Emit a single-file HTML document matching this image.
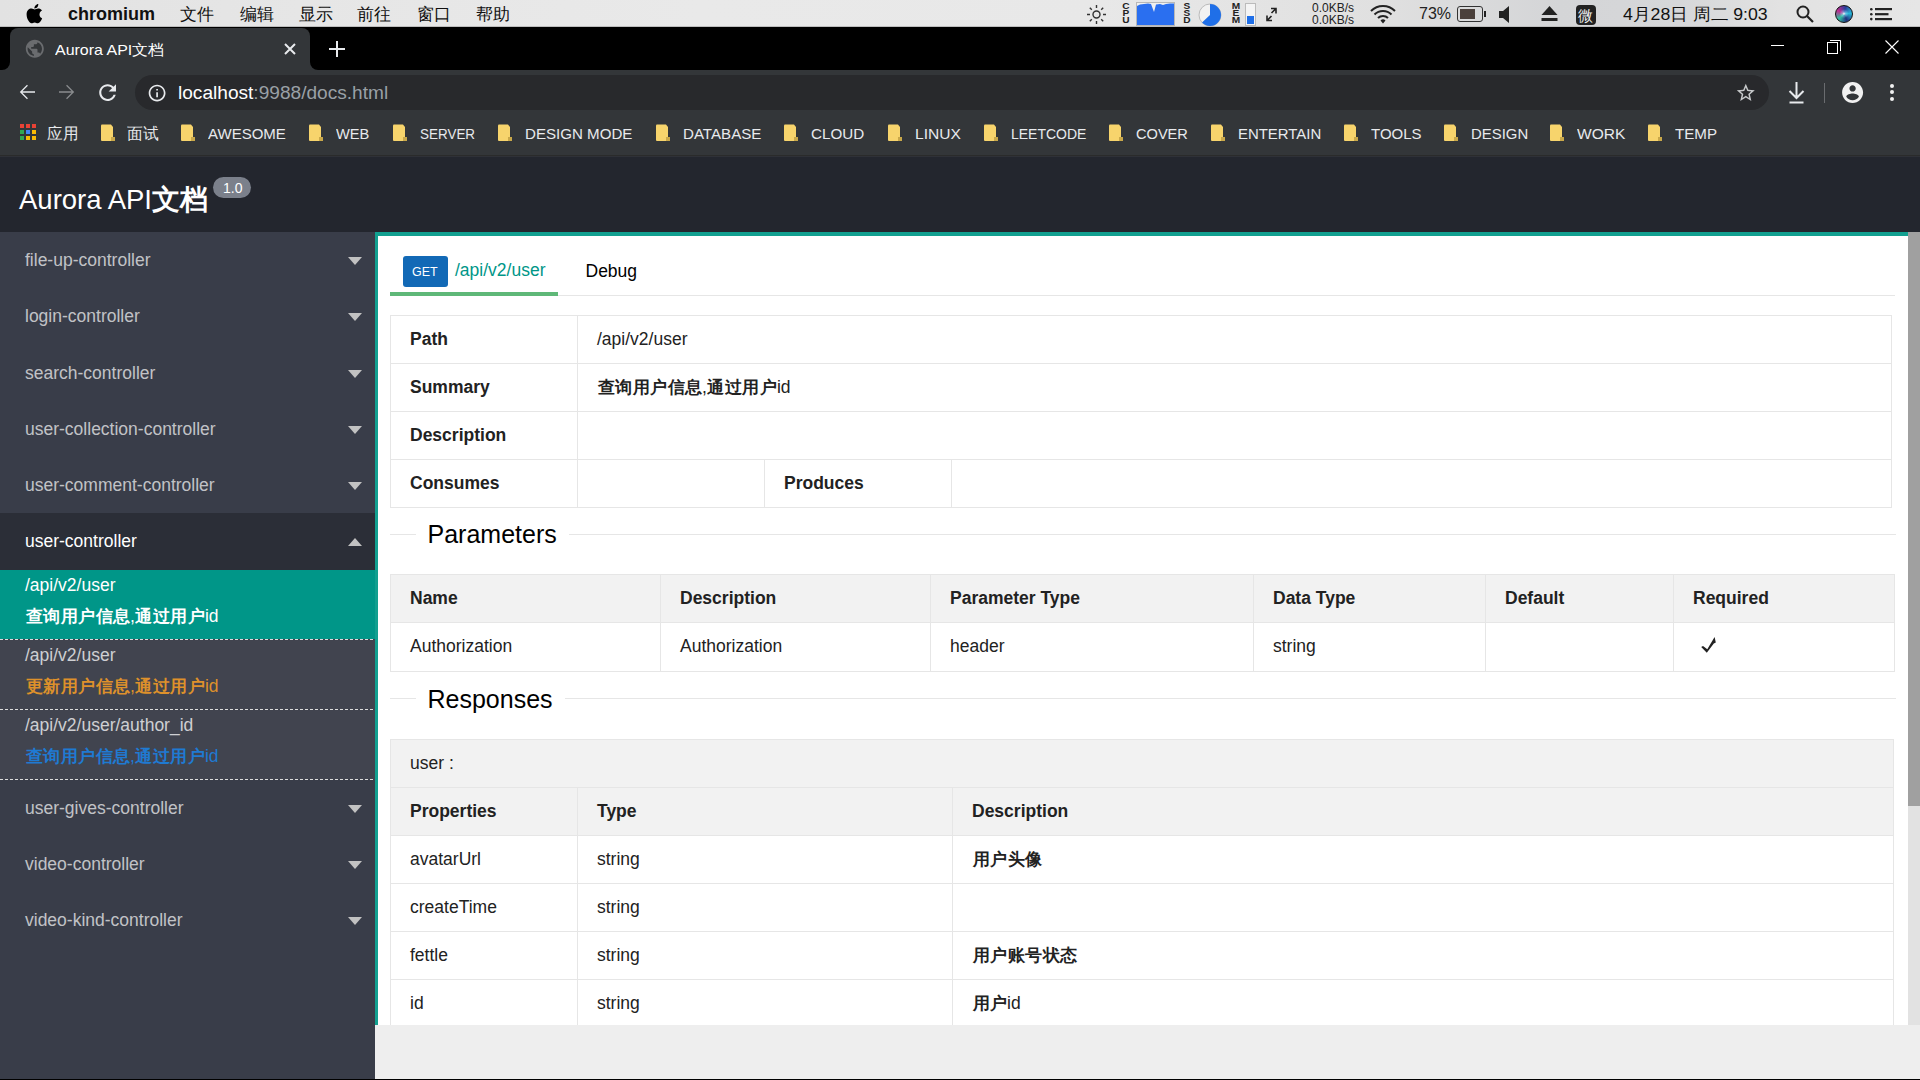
<!DOCTYPE html><html><head><meta charset="utf-8"><style>
*{box-sizing:border-box;margin:0;padding:0}
html,body{width:1920px;height:1080px;overflow:hidden;background:#000;font-family:"Liberation Sans",sans-serif}
.a{position:absolute}
.t{position:absolute;white-space:nowrap;line-height:1}
.cj{font-size:16.5px;letter-spacing:.5px;font-weight:bold;margin-left:.5px;margin-right:-.5px}
.cjh{letter-spacing:-0.5px;font-weight:bold}
.b{font-weight:bold}
svg{position:absolute;overflow:visible}
</style></head><body>
<div class="a" style="left:0px;top:0px;width:1920px;height:27px;background:linear-gradient(90deg,#e2e2e2 0px,#e6e6e6 300px,#e9e9e9 700px,#e8e8e8 1100px,#e0e0e0 1380px,#d4d5d7 1560px,#d6d7d9 1680px,#e2e2e2 1780px,#e6e6e6 1920px);"></div>
<div class="a" style="left:0px;top:26px;width:1920px;height:1px;background:#bdbdbd;"></div>
<svg style="left:26px;top:4px" width="18" height="20" viewBox="0 0 170 200"><path fill="#000" d="M150 68c-1 1-20 12-20 36 0 28 25 38 26 38 0 1-4 14-13 27-8 11-17 23-30 23s-16-8-31-8c-15 0-20 8-32 8s-21-11-30-24C9 153 1 128 1 104c0-38 25-58 49-58 13 0 24 9 32 9 8 0 20-9 35-9 6 0 26 1 39 20zM108 32c6-7 10-17 10-27 0-1 0-3 0-4-10 0-21 7-28 14-6 6-11 16-11 26 0 1 0 3 0 3 1 0 2 0 3 0 9 0 19-6 26-12z"/></svg>
<div class="t" style="left:68px;top:4.76px;font-size:18px;color:#111;font-weight:bold">chromium</div>
<div class="t" style="left:180px;top:5.61px;font-size:17px;color:#111;">文件</div>
<div class="t" style="left:240px;top:5.61px;font-size:17px;color:#111;">编辑</div>
<div class="t" style="left:299px;top:5.61px;font-size:17px;color:#111;">显示</div>
<div class="t" style="left:357px;top:5.61px;font-size:17px;color:#111;">前往</div>
<div class="t" style="left:417px;top:5.61px;font-size:17px;color:#111;">窗口</div>
<div class="t" style="left:476px;top:5.61px;font-size:17px;color:#111;">帮助</div>
<svg style="left:1087px;top:5px" width="19" height="19" viewBox="0 0 19 19"><circle cx="9.5" cy="9.5" r="3.5" fill="none" stroke="#333" stroke-width="1.4"/><g stroke="#333" stroke-width="1.4"><path d="M9.5 0v3M9.5 16v3M0 9.5h3M16 9.5h3M2.8 2.8l2 2M14.2 14.2l2 2M2.8 16.2l2-2M14.2 4.8l2-2"/></g></svg>
<div class="t" style="left:1126px;top:2.15px;font-size:8.8px;color:#222;font-weight:bold;width:10px;margin-left:-5px;text-align:center;transform:scaleX(1.15)">C</div>
<div class="t" style="left:1126px;top:9.15px;font-size:8.8px;color:#222;font-weight:bold;width:10px;margin-left:-5px;text-align:center;transform:scaleX(1.15)">P</div>
<div class="t" style="left:1126px;top:16.15px;font-size:8.8px;color:#222;font-weight:bold;width:10px;margin-left:-5px;text-align:center;transform:scaleX(1.15)">U</div>
<div class="a" style="left:1136px;top:2px;width:39px;height:24px;background:#f0f0f0;border:1px solid #b8b8b8"></div>
<svg style="left:1137px;top:3px" width="37" height="22" viewBox="0 0 37 22"><path d="M0 22V3L3 1.5 7 1 11 0.5 14 1 17 9 19 1.5 23 1 26 2 29 1 33 0.5 37 0.5V22z" fill="#2a6ff0"/></svg>
<div class="t" style="left:1187px;top:2.15px;font-size:8.8px;color:#222;font-weight:bold;width:10px;margin-left:-5px;text-align:center;transform:scaleX(1.15)">S</div>
<div class="t" style="left:1187px;top:9.15px;font-size:8.8px;color:#222;font-weight:bold;width:10px;margin-left:-5px;text-align:center;transform:scaleX(1.15)">S</div>
<div class="t" style="left:1187px;top:16.15px;font-size:8.8px;color:#222;font-weight:bold;width:10px;margin-left:-5px;text-align:center;transform:scaleX(1.15)">D</div>
<svg style="left:1198px;top:3px" width="24" height="24" viewBox="0 0 24 24"><circle cx="12" cy="12" r="11" fill="#f2f2f2" stroke="#bbb"/><path d="M12 12V1a11 11 0 0 1 0 22 11 11 0 0 1-8-3.5z" fill="#1f6fe8"/></svg>
<div class="t" style="left:1236px;top:2.15px;font-size:8.8px;color:#222;font-weight:bold;width:10px;margin-left:-5px;text-align:center;transform:scaleX(1.15)">M</div>
<div class="t" style="left:1236px;top:9.15px;font-size:8.8px;color:#222;font-weight:bold;width:10px;margin-left:-5px;text-align:center;transform:scaleX(1.15)">E</div>
<div class="t" style="left:1236px;top:16.15px;font-size:8.8px;color:#222;font-weight:bold;width:10px;margin-left:-5px;text-align:center;transform:scaleX(1.15)">M</div>
<div class="a" style="left:1245px;top:3px;width:11px;height:23px;background:#f4f4f4;border:1px solid #bbb"></div>
<div class="a" style="left:1247px;top:16px;width:7px;height:8px;background:#1f6fe8;"></div>
<svg style="left:1266px;top:6px" width="11" height="17" viewBox="0 0 11 17"><path d="M5 2.5h5v5M10 2.5L5.5 7M6 14.5H1v-5M1 14.5L5.5 10" fill="none" stroke="#222" stroke-width="1.6"/></svg>
<div class="t" style="left:1312px;top:1.84px;font-size:12px;color:#222;">0.0KB/s</div>
<div class="t" style="left:1312px;top:13.84px;font-size:12px;color:#222;">0.0KB/s</div>
<svg style="left:1370px;top:5px" width="26" height="19" viewBox="0 0 26 19"><path d="M1 6a17 17 0 0 1 24 0M4.5 9.5a12 12 0 0 1 17 0M8 13a7 7 0 0 1 10 0" fill="none" stroke="#222" stroke-width="2"/><path d="M10.5 15.5l2.5 3 2.5-3a3.5 3.5 0 0 0-5 0z" fill="#222"/></svg>
<div class="t" style="left:1419px;top:6.46px;font-size:16px;color:#222;">73%</div>
<div class="a" style="left:1457px;top:6px;width:26px;height:16px;background:transparent;border:1.5px solid #333;border-radius:3px"></div>
<div class="a" style="left:1460px;top:9px;width:15px;height:10px;background:#4b403b;"></div>
<div class="a" style="left:1484px;top:11px;width:2px;height:6px;background:#222;"></div>
<svg style="left:1499px;top:6px" width="14" height="17" viewBox="0 0 14 17"><path d="M0 5h4l6-5v17l-6-5H0z" fill="#222"/></svg>
<svg style="left:1541px;top:6px" width="17" height="17" viewBox="0 0 17 17"><path d="M8.5 0l8 9H.5z" fill="#222"/><rect x=".5" y="12" width="16" height="3" fill="#222"/></svg>
<div class="a" style="left:1576px;top:5px;width:20px;height:20px;background:#222;border-radius:4px"></div>
<div class="t" style="left:1578px;top:8.30px;font-size:15px;color:#eee;">微</div>
<div class="t" style="left:1623px;top:5.61px;font-size:17px;color:#111;;transform-origin:0 0;transform:scaleX(1.0410)">4月28日 周二 9:03</div>
<svg style="left:1796px;top:5px" width="18" height="18" viewBox="0 0 18 18"><circle cx="7" cy="7" r="5.5" fill="none" stroke="#222" stroke-width="2"/><path d="M11 11l6 6" stroke="#222" stroke-width="2.2"/></svg>
<div class="a" style="left:1835px;top:5px;width:18px;height:18px;background:radial-gradient(circle at 50% 48%,rgba(255,255,255,.95) 0,rgba(160,230,255,.5) 15%,rgba(0,0,0,0) 40%),conic-gradient(from 300deg,#c02c90,#2a3c9a,#28b8d8,#203080,#30c0a0,#c02c90);border-radius:50%;border:1.5px solid #111"></div>
<svg style="left:1870px;top:8px" width="22" height="13" viewBox="0 0 22 13"><g fill="#222"><circle cx="1.3" cy="1.3" r="1.3"/><circle cx="1.3" cy="6.2" r="1.3"/><circle cx="1.3" cy="11.1" r="1.3"/><rect x="5" y="0" width="17" height="2.2"/><rect x="5" y="5.1" width="13.5" height="2.2"/><rect x="5" y="10" width="17" height="2.2"/></g></svg>
<div class="a" style="left:0px;top:27px;width:1920px;height:43px;background:#000;"></div>
<div class="a" style="left:0px;top:60px;width:320px;height:10px;background:#333639;"></div>
<div class="a" style="left:0px;top:60px;width:10px;height:10px;background:#000;border-bottom-right-radius:8px"></div>
<div class="a" style="left:310px;top:60px;width:10px;height:10px;background:#000;border-bottom-left-radius:8px"></div>
<div class="a" style="left:10px;top:28px;width:300px;height:42px;background:#333639;border-radius:8px 8px 0 0"></div>
<svg style="left:24.2px;top:38.2px" width="21.6" height="21.6" viewBox="0 0 24 24"><path fill="#6a6c6f" d="M12 2C6.48 2 2 6.48 2 12s4.48 10 10 10 10-4.48 10-10S17.52 2 12 2zm-1 17.93c-3.95-.49-7-3.85-7-7.93 0-.62.08-1.210.21-1.79L9 15v1c0 1.1.9 2 2 2v1.93zm6.9-2.54c-.26-.81-1-1.39-1.9-1.39h-1v-3c0-.55-.45-1-1-1H8v-2h2c.55 0 1-.45 1-1V7h2c1.1 0 2-.9 2-2v-.41c2.93 1.19 5 4.06 5 7.41 0 2.080-.8 3.97-2.1 5.39z"/></svg>
<div class="t" style="left:55px;top:41.80px;font-size:15px;color:#fff;;transform-origin:0 0;transform:scaleX(1.0649)">Aurora API文档</div>
<svg style="left:284px;top:43px" width="12" height="12" viewBox="0 0 12 12"><path d="M1 1l10 10M11 1L1 11" stroke="#e8eaed" stroke-width="2"/></svg>
<svg style="left:329px;top:41px" width="16" height="16" viewBox="0 0 16 16"><path d="M8 0v16M0 8h16" stroke="#e8eaed" stroke-width="2"/></svg>
<div class="a" style="left:1771px;top:45px;width:13px;height:1px;background:#fff;"></div>
<svg style="left:1827px;top:40px" width="14" height="14" viewBox="0 0 14 14"><rect x=".5" y="2.5" width="10" height="11" fill="none" stroke="#fff"/><path d="M3 .5h10.5V11" fill="none" stroke="#fff"/></svg>
<svg style="left:1885px;top:40px" width="14" height="14" viewBox="0 0 14 14"><path d="M.5 .5l13 13M13.5 .5l-13 13" stroke="#fff" stroke-width="1.1"/></svg>
<div class="a" style="left:0px;top:70px;width:1920px;height:86px;background:#333639;"></div>
<div class="a" style="left:0px;top:155px;width:1920px;height:1px;background:#2a2b2b;"></div>
<svg style="left:15px;top:80.3px" width="24" height="24" viewBox="0 0 24 24"><path fill="#e8eaed" d="M20 11.2H7.4l5.5-5.5L12 4.8 4.8 12l7.2 7.2.9-.9-5.5-5.5H20z"/></svg>
<svg style="left:55px;top:80.3px" width="24" height="24" viewBox="0 0 24 24"><path fill="#8a8c8e" d="M4 11.2h12.6l-5.5-5.5.9-.9 7.2 7.2-7.2 7.2-.9-.9 5.5-5.5H4z"/></svg>
<svg style="left:94.8px;top:80.2px" width="25.2" height="25.2" viewBox="0 0 24 24"><path fill="#e8eaed" d="M17.65 6.35C16.2 4.9 14.21 4 12 4c-4.42 0-7.99 3.58-7.99 8s3.57 8 7.99 8c3.73 0 6.84-2.55 7.73-6h-2.08c-.82 2.33-3.04 4-5.65 4-3.31 0-6-2.690-6-6s2.69-6 6-6c1.66 0 3.14.69 4.22 1.78L13 11h7V4l-2.35 2.35z"/></svg>
<div class="a" style="left:135px;top:75px;width:1634px;height:35px;background:#28292c;border-radius:17.5px"></div>
<svg style="left:147.3px;top:82.7px" width="20.2" height="20.2" viewBox="0 0 24 24"><path fill="#e8eaed" d="M11 7h2v2h-2zm0 4h2v6h-2zm1-9C6.48 2 2 6.480 2 12s4.48 10 10 10 10-4.48 10-10S17.52 2 12 2zm0 18c-4.41 0-8-3.59-8-8s3.59-8 8-8 8 3.59 8 8-3.59 8-8 8z"/></svg>
<div class="t" style="left:178px;top:83.76px;font-size:18px;color:#fff;;transform-origin:0 0;transform:scaleX(1.0609)">localhost<span style="color:#9aa0a6">:9988/docs.html</span></div>
<svg style="left:1735.2px;top:82.2px" width="21.6" height="21.6" viewBox="0 0 24 24"><path fill="#c8cacc" d="M22 9.24l-7.19-.62L12 2 9.19 8.63 2 9.24l5.46 4.73L5.82 21 12 17.27 18.18 21l-1.63-7.03L22 9.24zM12 15.4l-3.76 2.27 1-4.28-3.32-2.88 4.38-.38L12 6.1l1.71 4.04 4.38.38-3.32 2.88 1 4.28L12 15.4z"/></svg>
<svg style="left:1788px;top:82px" width="17" height="22" viewBox="0 0 17 22"><path d="M8.5 0v16M1.5 9l7 7 7-7M1.5 20.5h14" fill="none" stroke="#e8eaed" stroke-width="2"/></svg>
<div class="a" style="left:1824px;top:83px;width:1px;height:20px;background:#6a6c6f;"></div>
<svg style="left:1839.9px;top:79.9px" width="25.2" height="25.2" viewBox="0 0 24 24"><path fill="#f1f1f1" d="M12 2C6.48 2 2 6.48 2 12s4.48 10 10 10 10-4.48 10-10S17.52 2 12 2zm0 3c1.66 0 3 1.34 3 3s-1.34 3-3 3-3-1.34-3-3 1.34-3 3-3zm0 14.2c-2.5 0-4.71-1.28-6-3.22.03-1.99 4-3.08 6-3.080 1.99 0 5.97 1.09 6 3.08-1.29 1.94-3.5 3.22-6 3.22z"/></svg>
<div class="a" style="left:1890px;top:84px;width:4px;height:4px;background:#f1f1f1;border-radius:2px"></div>
<div class="a" style="left:1890px;top:90px;width:4px;height:4px;background:#f1f1f1;border-radius:2px"></div>
<div class="a" style="left:1890px;top:97px;width:4px;height:4px;background:#f1f1f1;border-radius:2px"></div>
<div class="a" style="left:20px;top:124px;width:4px;height:4px;background:#e94235;"></div>
<div class="a" style="left:26px;top:124px;width:4px;height:4px;background:#e94235;"></div>
<div class="a" style="left:32px;top:124px;width:4px;height:4px;background:#e94235;"></div>
<div class="a" style="left:20px;top:130px;width:4px;height:4px;background:#33a852;"></div>
<div class="a" style="left:26px;top:130px;width:4px;height:4px;background:#4286f5;"></div>
<div class="a" style="left:32px;top:130px;width:4px;height:4px;background:#fabb05;"></div>
<div class="a" style="left:20px;top:136px;width:4px;height:4px;background:#33a852;"></div>
<div class="a" style="left:26px;top:136px;width:4px;height:4px;background:#fabb05;"></div>
<div class="a" style="left:32px;top:136px;width:4px;height:4px;background:#fabb05;"></div>
<div class="t" style="left:47px;top:126.46px;font-size:16px;color:#e8eaed;;transform-origin:0 0;transform:scaleX(0.9750)">应用</div>
<svg style="left:100px;top:124px" width="16" height="18" viewBox="0 0 16 18"><path d="M1 1.5Q1 .5 2 .5h9l2 2.5V17H2Q1 17 1 16z" fill="#f7d46c"/><path d="M11 13h4v4h-4z" fill="#c9a84a"/></svg>
<div class="t" style="left:127px;top:125.68px;font-size:15.5px;color:#e8eaed;;transform-origin:0 0;transform:scaleX(0.9875)">面试</div>
<svg style="left:180px;top:124px" width="16" height="18" viewBox="0 0 16 18"><path d="M1 1.5Q1 .5 2 .5h9l2 2.5V17H2Q1 17 1 16z" fill="#f7d46c"/><path d="M11 13h4v4h-4z" fill="#c9a84a"/></svg>
<div class="t" style="left:208px;top:125.68px;font-size:15.5px;color:#e8eaed;;transform-origin:0 0;transform:scaleX(0.9690)">AWESOME</div>
<svg style="left:308px;top:124px" width="16" height="18" viewBox="0 0 16 18"><path d="M1 1.5Q1 .5 2 .5h9l2 2.5V17H2Q1 17 1 16z" fill="#f7d46c"/><path d="M11 13h4v4h-4z" fill="#c9a84a"/></svg>
<div class="t" style="left:336px;top:125.68px;font-size:15.5px;color:#e8eaed;;transform-origin:0 0;transform:scaleX(0.9430)">WEB</div>
<svg style="left:392px;top:124px" width="16" height="18" viewBox="0 0 16 18"><path d="M1 1.5Q1 .5 2 .5h9l2 2.5V17H2Q1 17 1 16z" fill="#f7d46c"/><path d="M11 13h4v4h-4z" fill="#c9a84a"/></svg>
<div class="t" style="left:420px;top:125.68px;font-size:15.5px;color:#e8eaed;;transform-origin:0 0;transform:scaleX(0.8681)">SERVER</div>
<svg style="left:497px;top:124px" width="16" height="18" viewBox="0 0 16 18"><path d="M1 1.5Q1 .5 2 .5h9l2 2.5V17H2Q1 17 1 16z" fill="#f7d46c"/><path d="M11 13h4v4h-4z" fill="#c9a84a"/></svg>
<div class="t" style="left:525px;top:125.68px;font-size:15.5px;color:#e8eaed;;transform-origin:0 0;transform:scaleX(0.9743)">DESIGN MODE</div>
<svg style="left:655px;top:124px" width="16" height="18" viewBox="0 0 16 18"><path d="M1 1.5Q1 .5 2 .5h9l2 2.5V17H2Q1 17 1 16z" fill="#f7d46c"/><path d="M11 13h4v4h-4z" fill="#c9a84a"/></svg>
<div class="t" style="left:683px;top:125.68px;font-size:15.5px;color:#e8eaed;;transform-origin:0 0;transform:scaleX(0.9750)">DATABASE</div>
<svg style="left:783px;top:124px" width="16" height="18" viewBox="0 0 16 18"><path d="M1 1.5Q1 .5 2 .5h9l2 2.5V17H2Q1 17 1 16z" fill="#f7d46c"/><path d="M11 13h4v4h-4z" fill="#c9a84a"/></svg>
<div class="t" style="left:811px;top:125.68px;font-size:15.5px;color:#e8eaed;;transform-origin:0 0;transform:scaleX(0.9804)">CLOUD</div>
<svg style="left:887px;top:124px" width="16" height="18" viewBox="0 0 16 18"><path d="M1 1.5Q1 .5 2 .5h9l2 2.5V17H2Q1 17 1 16z" fill="#f7d46c"/><path d="M11 13h4v4h-4z" fill="#c9a84a"/></svg>
<div class="t" style="left:915px;top:125.68px;font-size:15.5px;color:#e8eaed;;transform-origin:0 0;transform:scaleX(1.0031)">LINUX</div>
<svg style="left:983px;top:124px" width="16" height="18" viewBox="0 0 16 18"><path d="M1 1.5Q1 .5 2 .5h9l2 2.5V17H2Q1 17 1 16z" fill="#f7d46c"/><path d="M11 13h4v4h-4z" fill="#c9a84a"/></svg>
<div class="t" style="left:1011px;top:125.68px;font-size:15.5px;color:#e8eaed;;transform-origin:0 0;transform:scaleX(0.9023)">LEETCODE</div>
<svg style="left:1108px;top:124px" width="16" height="18" viewBox="0 0 16 18"><path d="M1 1.5Q1 .5 2 .5h9l2 2.5V17H2Q1 17 1 16z" fill="#f7d46c"/><path d="M11 13h4v4h-4z" fill="#c9a84a"/></svg>
<div class="t" style="left:1136px;top:125.68px;font-size:15.5px;color:#e8eaed;;transform-origin:0 0;transform:scaleX(0.9415)">COVER</div>
<svg style="left:1210px;top:124px" width="16" height="18" viewBox="0 0 16 18"><path d="M1 1.5Q1 .5 2 .5h9l2 2.5V17H2Q1 17 1 16z" fill="#f7d46c"/><path d="M11 13h4v4h-4z" fill="#c9a84a"/></svg>
<div class="t" style="left:1237.5px;top:125.68px;font-size:15.5px;color:#e8eaed;;transform-origin:0 0;transform:scaleX(0.9627)">ENTERTAIN</div>
<svg style="left:1343px;top:124px" width="16" height="18" viewBox="0 0 16 18"><path d="M1 1.5Q1 .5 2 .5h9l2 2.5V17H2Q1 17 1 16z" fill="#f7d46c"/><path d="M11 13h4v4h-4z" fill="#c9a84a"/></svg>
<div class="t" style="left:1371px;top:125.68px;font-size:15.5px;color:#e8eaed;;transform-origin:0 0;transform:scaleX(0.9662)">TOOLS</div>
<svg style="left:1443px;top:124px" width="16" height="18" viewBox="0 0 16 18"><path d="M1 1.5Q1 .5 2 .5h9l2 2.5V17H2Q1 17 1 16z" fill="#f7d46c"/><path d="M11 13h4v4h-4z" fill="#c9a84a"/></svg>
<div class="t" style="left:1471px;top:125.68px;font-size:15.5px;color:#e8eaed;;transform-origin:0 0;transform:scaleX(0.9624)">DESIGN</div>
<svg style="left:1549px;top:124px" width="16" height="18" viewBox="0 0 16 18"><path d="M1 1.5Q1 .5 2 .5h9l2 2.5V17H2Q1 17 1 16z" fill="#f7d46c"/><path d="M11 13h4v4h-4z" fill="#c9a84a"/></svg>
<div class="t" style="left:1577px;top:125.68px;font-size:15.5px;color:#e8eaed;;transform-origin:0 0;transform:scaleX(1.0017)">WORK</div>
<svg style="left:1647px;top:124px" width="16" height="18" viewBox="0 0 16 18"><path d="M1 1.5Q1 .5 2 .5h9l2 2.5V17H2Q1 17 1 16z" fill="#f7d46c"/><path d="M11 13h4v4h-4z" fill="#c9a84a"/></svg>
<div class="t" style="left:1674.5px;top:125.68px;font-size:15.5px;color:#e8eaed;;transform-origin:0 0;transform:scaleX(0.9753)">TEMP</div>
<div class="a" style="left:0px;top:156px;width:1920px;height:76px;background:#23262e;"></div>
<div class="a" style="left:0px;top:156px;width:1920px;height:1px;background:#2f3137;"></div>
<div class="t" style="left:19px;top:186.12px;font-size:27.5px;color:#fff;">Aurora API<span class="cjh">文档</span></div>
<div class="a" style="left:213px;top:177px;width:38px;height:21px;background:#7b808b;border-radius:10.5px"></div>
<div class="t" style="left:223px;top:180.65px;font-size:14px;color:#fff;">1.0</div>
<div class="a" style="left:0px;top:232px;width:375px;height:848px;background:#393d49;"></div>
<div class="t" style="left:25px;top:252.09px;font-size:17.5px;color:rgba(255,255,255,.7);">file-up-controller</div>
<div class="a" style="left:348px;top:257.00px;width:0;height:0;border-left:7.6px solid transparent;border-right:7.6px solid transparent;border-top:8.4px solid #c2c2c2"></div>
<div class="t" style="left:25px;top:308.34px;font-size:17.5px;color:rgba(255,255,255,.7);">login-controller</div>
<div class="a" style="left:348px;top:313.25px;width:0;height:0;border-left:7.6px solid transparent;border-right:7.6px solid transparent;border-top:8.4px solid #c2c2c2"></div>
<div class="t" style="left:25px;top:364.59px;font-size:17.5px;color:rgba(255,255,255,.7);">search-controller</div>
<div class="a" style="left:348px;top:369.50px;width:0;height:0;border-left:7.6px solid transparent;border-right:7.6px solid transparent;border-top:8.4px solid #c2c2c2"></div>
<div class="t" style="left:25px;top:420.84px;font-size:17.5px;color:rgba(255,255,255,.7);">user-collection-controller</div>
<div class="a" style="left:348px;top:425.75px;width:0;height:0;border-left:7.6px solid transparent;border-right:7.6px solid transparent;border-top:8.4px solid #c2c2c2"></div>
<div class="t" style="left:25px;top:477.09px;font-size:17.5px;color:rgba(255,255,255,.7);">user-comment-controller</div>
<div class="a" style="left:348px;top:482.00px;width:0;height:0;border-left:7.6px solid transparent;border-right:7.6px solid transparent;border-top:8.4px solid #c2c2c2"></div>
<div class="a" style="left:0px;top:513px;width:375px;height:57px;background:#2b2e37;"></div>
<div class="t" style="left:25px;top:533.39px;font-size:17.5px;color:#fff;">user-controller</div>
<div class="a" style="left:348px;top:538px;width:0;height:0;border-left:7.6px solid transparent;border-right:7.6px solid transparent;border-bottom:8.4px solid #c2c2c2"></div>
<div class="a" style="left:0px;top:570px;width:375px;height:210px;background:#41444f;"></div>
<div class="a" style="left:0px;top:570px;width:375px;height:69px;background:#009688;"></div>
<div class="t" style="left:25px;top:576.79px;font-size:17.5px;color:#fff;">/api/v2/user</div>
<div class="t" style="left:25px;top:608.19px;font-size:17.5px;color:#fff;"><span class="cj">查询用户信息</span>,<span class="cj">通过用户</span>id</div>
<div class="a" style="left:0px;top:639px;width:375px;height:1px;background:repeating-linear-gradient(90deg,#ddd 0 3px,transparent 3px 5px);"></div>
<div class="t" style="left:25px;top:646.79px;font-size:17.5px;color:rgba(255,255,255,.75);">/api/v2/user</div>
<div class="t" style="left:25px;top:678.19px;font-size:17.5px;color:#de912b;"><span class="cj">更新用户信息</span>,<span class="cj">通过用户</span>id</div>
<div class="a" style="left:0px;top:709px;width:375px;height:1px;background:repeating-linear-gradient(90deg,#ddd 0 3px,transparent 3px 5px);"></div>
<div class="t" style="left:25px;top:716.79px;font-size:17.5px;color:rgba(255,255,255,.75);">/api/v2/user/author_id</div>
<div class="t" style="left:25px;top:748.19px;font-size:17.5px;color:#1f7ad2;"><span class="cj">查询用户信息</span>,<span class="cj">通过用户</span>id</div>
<div class="a" style="left:0px;top:779px;width:375px;height:1px;background:repeating-linear-gradient(90deg,#ddd 0 3px,transparent 3px 5px);"></div>
<div class="t" style="left:25px;top:800.09px;font-size:17.5px;color:rgba(255,255,255,.7);">user-gives-controller</div>
<div class="a" style="left:348px;top:805.00px;width:0;height:0;border-left:7.6px solid transparent;border-right:7.6px solid transparent;border-top:8.4px solid #c2c2c2"></div>
<div class="t" style="left:25px;top:856.34px;font-size:17.5px;color:rgba(255,255,255,.7);">video-controller</div>
<div class="a" style="left:348px;top:861.25px;width:0;height:0;border-left:7.6px solid transparent;border-right:7.6px solid transparent;border-top:8.4px solid #c2c2c2"></div>
<div class="t" style="left:25px;top:911.59px;font-size:17.5px;color:rgba(255,255,255,.7);">video-kind-controller</div>
<div class="a" style="left:348px;top:916.50px;width:0;height:0;border-left:7.6px solid transparent;border-right:7.6px solid transparent;border-top:8.4px solid #c2c2c2"></div>
<div class="a" style="left:375px;top:232px;width:1545px;height:793px;background:#fff;"></div>
<div class="a" style="left:375px;top:232px;width:1533px;height:4px;background:#12a090;"></div>
<div class="a" style="left:375px;top:232px;width:3px;height:793px;background:#12a090;"></div>
<div class="a" style="left:1908px;top:232px;width:12px;height:793px;background:#e2e2e2;"></div>
<div class="a" style="left:1908px;top:232px;width:12px;height:574px;background:#a0a0a0;"></div>
<div class="a" style="left:403px;top:256px;width:45px;height:31px;background:#1269b6;border-radius:3px"></div>
<div class="t" style="left:412px;top:266.42px;font-size:12.5px;color:#fff;">GET</div>
<div class="t" style="left:455px;top:261.59px;font-size:17.5px;color:#009688;">/api/v2/user</div>
<div class="t" style="left:585.5px;top:262.59px;font-size:17.5px;color:#000;">Debug</div>
<div class="a" style="left:390px;top:295px;width:1505px;height:1px;background:#e6e6e6;"></div>
<div class="a" style="left:390px;top:292px;width:168px;height:4px;background:#5fb878;"></div>
<div class="a" style="left:390px;top:315px;width:1502px;height:1px;background:#e6e6e6;"></div>
<div class="a" style="left:390px;top:363px;width:1502px;height:1px;background:#e6e6e6;"></div>
<div class="a" style="left:390px;top:411px;width:1502px;height:1px;background:#e6e6e6;"></div>
<div class="a" style="left:390px;top:459px;width:1502px;height:1px;background:#e6e6e6;"></div>
<div class="a" style="left:390px;top:507px;width:1502px;height:1px;background:#e6e6e6;"></div>
<div class="a" style="left:390px;top:315px;width:1px;height:193px;background:#e6e6e6;"></div>
<div class="a" style="left:1891px;top:315px;width:1px;height:193px;background:#e6e6e6;"></div>
<div class="a" style="left:577px;top:315px;width:1px;height:193px;background:#e6e6e6;"></div>
<div class="a" style="left:764px;top:459px;width:1px;height:49px;background:#e6e6e6;"></div>
<div class="a" style="left:951px;top:459px;width:1px;height:49px;background:#e6e6e6;"></div>
<div class="t" style="left:410px;top:331.19px;font-size:17.5px;color:#222;font-weight:bold">Path</div>
<div class="t" style="left:597px;top:331.19px;font-size:17.5px;color:#222;">/api/v2/user</div>
<div class="t" style="left:410px;top:379.19px;font-size:17.5px;color:#222;font-weight:bold">Summary</div>
<div class="t" style="left:597px;top:379.19px;font-size:17.5px;color:#222;"><span class="cj">查询用户信息</span>,<span class="cj">通过用户</span>id</div>
<div class="t" style="left:410px;top:427.19px;font-size:17.5px;color:#222;font-weight:bold">Description</div>
<div class="t" style="left:410px;top:475.19px;font-size:17.5px;color:#222;font-weight:bold">Consumes</div>
<div class="t" style="left:784px;top:475.19px;font-size:17.5px;color:#222;font-weight:bold">Produces</div>
<div class="a" style="left:390px;top:534px;width:26px;height:1px;background:#e6e6e6;"></div>
<div class="a" style="left:569px;top:534px;width:1327px;height:1px;background:#e6e6e6;"></div>
<div class="t" style="left:427.5px;top:522.14px;font-size:25px;color:#000;">Parameters</div>
<div class="a" style="left:390px;top:574px;width:1505px;height:48px;background:#f2f2f2;"></div>
<div class="a" style="left:390px;top:574px;width:1505px;height:1px;background:#e6e6e6;"></div>
<div class="a" style="left:390px;top:622px;width:1505px;height:1px;background:#e6e6e6;"></div>
<div class="a" style="left:390px;top:671px;width:1505px;height:1px;background:#e6e6e6;"></div>
<div class="a" style="left:390px;top:574px;width:1px;height:98px;background:#e6e6e6;"></div>
<div class="a" style="left:660px;top:574px;width:1px;height:98px;background:#e6e6e6;"></div>
<div class="a" style="left:930px;top:574px;width:1px;height:98px;background:#e6e6e6;"></div>
<div class="a" style="left:1253px;top:574px;width:1px;height:98px;background:#e6e6e6;"></div>
<div class="a" style="left:1485px;top:574px;width:1px;height:98px;background:#e6e6e6;"></div>
<div class="a" style="left:1673px;top:574px;width:1px;height:98px;background:#e6e6e6;"></div>
<div class="a" style="left:1894px;top:574px;width:1px;height:98px;background:#e6e6e6;"></div>
<div class="t" style="left:410px;top:590.19px;font-size:17.5px;color:#222;font-weight:bold">Name</div>
<div class="t" style="left:680px;top:590.19px;font-size:17.5px;color:#222;font-weight:bold">Description</div>
<div class="t" style="left:950px;top:590.19px;font-size:17.5px;color:#222;font-weight:bold">Parameter Type</div>
<div class="t" style="left:1273px;top:590.19px;font-size:17.5px;color:#222;font-weight:bold">Data Type</div>
<div class="t" style="left:1505px;top:590.19px;font-size:17.5px;color:#222;font-weight:bold">Default</div>
<div class="t" style="left:1693px;top:590.19px;font-size:17.5px;color:#222;font-weight:bold">Required</div>
<div class="t" style="left:410px;top:638.19px;font-size:17.5px;color:#222;">Authorization</div>
<div class="t" style="left:680px;top:638.19px;font-size:17.5px;color:#222;">Authorization</div>
<div class="t" style="left:950px;top:638.19px;font-size:17.5px;color:#222;">header</div>
<div class="t" style="left:1273px;top:638.19px;font-size:17.5px;color:#222;">string</div>
<svg style="left:1700px;top:636px" width="18" height="18" viewBox="0 0 18 18"><path d="M1.2 10.9L3 10L7.3 13.3L14.6 1.1L15.8 6.6L13.8 7.6L6.8 16.7Z" fill="#222"/></svg>
<div class="a" style="left:390px;top:698px;width:26px;height:1px;background:#e6e6e6;"></div>
<div class="a" style="left:565px;top:698px;width:1331px;height:1px;background:#e6e6e6;"></div>
<div class="t" style="left:427.5px;top:686.64px;font-size:25px;color:#000;">Responses</div>
<div class="a" style="left:390px;top:739px;width:1504px;height:96px;background:#f2f2f2;"></div>
<div class="a" style="left:390px;top:739px;width:1504px;height:1px;background:#e6e6e6;"></div>
<div class="a" style="left:390px;top:787px;width:1504px;height:1px;background:#e6e6e6;"></div>
<div class="a" style="left:390px;top:835px;width:1504px;height:1px;background:#e6e6e6;"></div>
<div class="a" style="left:390px;top:883px;width:1504px;height:1px;background:#e6e6e6;"></div>
<div class="a" style="left:390px;top:931px;width:1504px;height:1px;background:#e6e6e6;"></div>
<div class="a" style="left:390px;top:979px;width:1504px;height:1px;background:#e6e6e6;"></div>
<div class="a" style="left:390px;top:739px;width:1px;height:287px;background:#e6e6e6;"></div>
<div class="a" style="left:1893px;top:739px;width:1px;height:287px;background:#e6e6e6;"></div>
<div class="a" style="left:577px;top:787px;width:1px;height:239px;background:#e6e6e6;"></div>
<div class="a" style="left:952px;top:787px;width:1px;height:239px;background:#e6e6e6;"></div>
<div class="t" style="left:410px;top:755.19px;font-size:17.5px;color:#222;">user :</div>
<div class="t" style="left:410px;top:803.19px;font-size:17.5px;color:#222;font-weight:bold">Properties</div>
<div class="t" style="left:597px;top:803.19px;font-size:17.5px;color:#222;font-weight:bold">Type</div>
<div class="t" style="left:972px;top:803.19px;font-size:17.5px;color:#222;font-weight:bold">Description</div>
<div class="t" style="left:410px;top:851.19px;font-size:17.5px;color:#222;">avatarUrl</div>
<div class="t" style="left:597px;top:851.19px;font-size:17.5px;color:#222;">string</div>
<div class="t" style="left:972px;top:851.19px;font-size:17.5px;color:#222;"><span class="cj">用户头像</span></div>
<div class="t" style="left:410px;top:899.19px;font-size:17.5px;color:#222;">createTime</div>
<div class="t" style="left:597px;top:899.19px;font-size:17.5px;color:#222;">string</div>
<div class="t" style="left:410px;top:947.19px;font-size:17.5px;color:#222;">fettle</div>
<div class="t" style="left:597px;top:947.19px;font-size:17.5px;color:#222;">string</div>
<div class="t" style="left:972px;top:947.19px;font-size:17.5px;color:#222;"><span class="cj">用户账号状态</span></div>
<div class="t" style="left:410px;top:995.19px;font-size:17.5px;color:#222;">id</div>
<div class="t" style="left:597px;top:995.19px;font-size:17.5px;color:#222;">string</div>
<div class="t" style="left:972px;top:995.19px;font-size:17.5px;color:#222;"><span class="cj">用户</span>id</div>
<div class="a" style="left:375px;top:1025px;width:1545px;height:54px;background:#eeeeee;"></div>
<div class="a" style="left:0px;top:1079px;width:1920px;height:1px;background:#000;"></div>
</body></html>
